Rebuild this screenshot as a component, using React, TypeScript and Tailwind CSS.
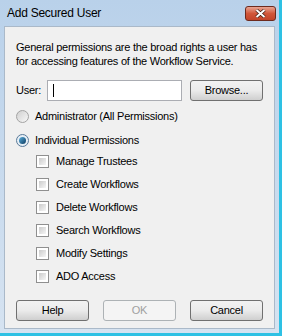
import React from "react";

const perms = [
  "Manage Trustees",
  "Create Workflows",
  "Delete Workflows",
  "Search Workflows",
  "Modify Settings",
  "ADO Access",
];

function Btn({ label, disabled }: { label: string; disabled?: boolean }) {
  return (
    <button
      className={
        "w-[73px] h-[21px] rounded-[3px] border text-[11px] leading-none " +
        (disabled
          ? "border-[#adb2b5] bg-[#f4f4f4] text-[#a0a0a0]"
          : "border-[#707070] bg-gradient-to-b from-[#f2f2f2] via-[#ebebeb] to-[#cfcfcf] text-black")
      }
    >
      {label}
    </button>
  );
}

export default function App() {
  return (
    <div
      className="w-[282px] h-[336px] flex flex-col bg-gradient-to-b from-[#b9d1ea] to-[#d6e3f1] border-b-[3px] border-b-[#2ec1e4] border-r-[3px] border-r-[#2ec1e4] overflow-hidden tracking-[-0.25px]"
      style={{ fontFamily: '"Liberation Sans", Arial, sans-serif' }}
    >
      <div className="h-[26px] flex items-center justify-between pl-[7px] pr-[3px] shrink-0">
        <span className="text-[12px] text-black">Add Secured User</span>
        <div className="w-[31px] h-[15px] rounded-[3px] border border-[#6d2a1e] bg-gradient-to-b from-[#e8a493] via-[#d1573a] to-[#c2442a] flex items-center justify-center">
          <svg width="11" height="9" viewBox="0 0 11 9">
            <path d="M1.5 1 L9.5 8 M9.5 1 L1.5 8" stroke="#3a1a10" strokeWidth="3.4" />
            <path d="M1.5 1 L9.5 8 M9.5 1 L1.5 8" stroke="#fff" strokeWidth="2" />
          </svg>
        </div>
      </div>
      <div className="flex-1 mx-[4px] mb-[4px] border border-[#aab9c9] bg-[#f0f0f0] px-[11px] pt-[13px] text-[11px] text-black">
        <p className="leading-[14px]">
          General permissions are the broad rights a user has for accessing
          features of the Workflow Service.
        </p>
        <div className="flex items-center mt-[12px]">
          <span className="w-[32px]">User:</span>
          <div className="w-[138px] h-[21px] border border-[#abadb3] bg-white flex items-center pl-[5px]">
            <span className="w-px h-[13px] bg-black" />
          </div>
          <div className="ml-[8px]">
            <Btn label="Browse..." />
          </div>
        </div>
        <div className="mt-[9px] flex flex-col gap-[11px]">
          <label className="flex items-center gap-[6px] h-[13px]">
            <span className="w-[13px] h-[13px] rounded-full border border-[#a3a3a3] bg-gradient-to-br from-[#d0d0d0] to-[#f8f8f8]" />
            Administrator (All Permissions)
          </label>
          <label className="flex items-center gap-[6px] h-[13px]">
            <span className="w-[13px] h-[13px] rounded-full border border-[#5a7a99] bg-[#e6eef5] flex items-center justify-center">
              <span className="w-[7px] h-[7px] rounded-full bg-gradient-to-br from-[#5bb1e0] to-[#0d3c60]" />
            </span>
            Individual Permissions
          </label>
        </div>
        <div className="mt-[8px] pl-[20px] flex flex-col gap-[10px]">
          {perms.map((p) => (
            <label key={p} className="flex items-center gap-[7px] h-[13px]">
              <span className="w-[13px] h-[13px] border border-[#8f8f8f] bg-white p-[2px]">
                <span className="block w-full h-full bg-gradient-to-br from-[#cbcbcb] to-[#f6f6f6]" />
              </span>
              {p}
            </label>
          ))}
        </div>
        <div className="mt-[17px] flex justify-between">
          <Btn label="Help" />
          <Btn label="OK" disabled />
          <Btn label="Cancel" />
        </div>
      </div>
    </div>
  );
}
